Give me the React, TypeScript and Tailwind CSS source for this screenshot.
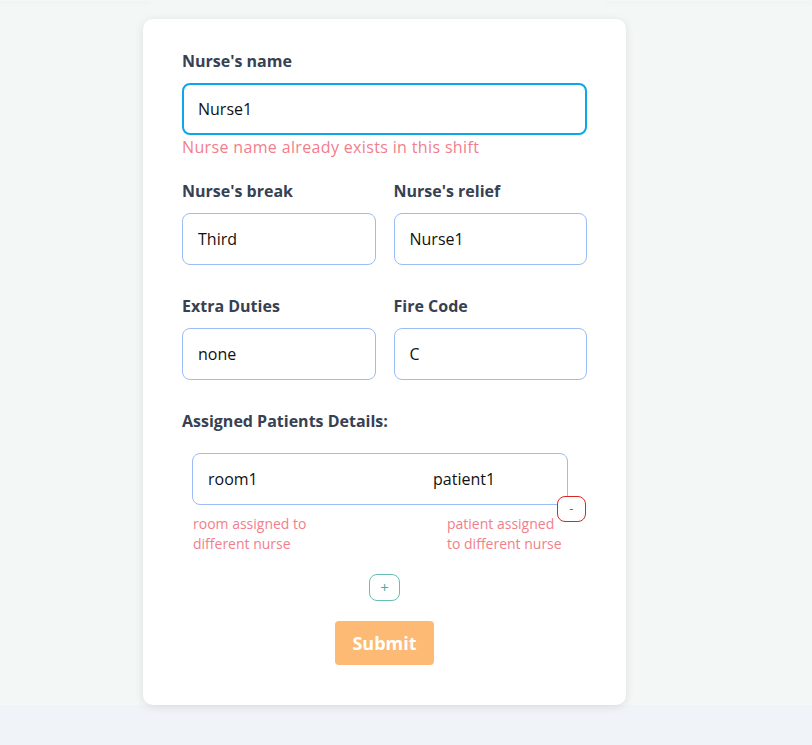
import { useState } from 'react';

const font = { fontFamily: '"Open Sans", "Noto Sans", sans-serif' };

function Field({ label, value }: { label: string; value: string }) {
  return (
    <div className="flex flex-col">
      <label className="text-[16px] leading-[24px] font-bold text-[#374151]">{label}</label>
      <input
        readOnly
        value={value}
        className="mt-[10px] h-[52px] w-full rounded-[8px] border border-[#9bbcf5] px-[15px] text-[16px] text-[#111] outline-none"
      />
    </div>
  );
}

export default function App() {
  const [name, setName] = useState('Nurse1');

  return (
    <div className="min-h-screen bg-[#f0f3f8]" style={font}>
      <div className="bg-[#f3f8f6]">
        <div className="flex h-0 justify-between">
          <div className="h-px w-[150px] bg-[#f3f8f6] shadow-[0_0_6px_rgba(0,0,0,0.12)]" />
          <div className="h-px w-[206px] bg-[#f3f8f6] shadow-[0_0_6px_rgba(0,0,0,0.12)]" />
        </div>
        <div className="flex pt-[19px]">
          <form className="ml-[143px] w-[483px] rounded-[10px] bg-white px-[39px] pt-[30px] pb-[40px] shadow-[0_2px_10px_rgba(0,0,0,0.1)]">
            <div className="flex flex-col">
              <label className="text-[16px] leading-[24px] font-bold text-[#374151]">Nurse's name</label>
              <input
                value={name}
                onChange={(e) => setName(e.target.value)}
                autoFocus
                className="mt-[10px] h-[52px] w-full rounded-[8px] border-2 border-[#0ea5e9] px-[14px] text-[16px] text-[#111] outline-none"
              />
              <p className="text-[16px] leading-[24px] tracking-[0.35px] text-[#f27e8b]">
                Nurse name already exists in this shift
              </p>
            </div>

            <div className="mt-[20px] grid grid-cols-2 gap-x-[18px] gap-y-[29px]">
              <Field label="Nurse's break" value="Third" />
              <Field label="Nurse's relief" value="Nurse1" />
              <Field label="Extra Duties" value="none" />
              <Field label="Fire Code" value="C" />
            </div>

            <h3 className="mt-[29px] text-[16px] leading-[24px] font-bold text-[#374151]">Assigned Patients Details:</h3>

            <div className="relative mt-[20px] ml-[10px] w-[376px]">
              <div className="flex h-[52px] items-center rounded-[8px] border border-[#9bbcf5] text-[16px] text-[#111]">
                <span className="w-[240px] pl-[15px]">room1</span>
                <span>patient1</span>
              </div>
              <button
                type="button"
                className="absolute top-[43px] right-[-18px] flex h-[26px] w-[29px] items-center justify-center rounded-[8px] border border-[#dc2626] bg-white text-[12px] leading-none text-[#dc2626]"
              >
                -
              </button>
            </div>

            <div className="mt-[9px] ml-[11px] flex text-[14px] leading-[20px] text-[#f27e8b]">
              <p className="w-[254px]">
                room assigned to
                <br />
                different nurse
              </p>
              <p>
                patient assigned
                <br />
                to different nurse
              </p>
            </div>

            <div className="mt-[20px] flex justify-center">
              <button
                type="button"
                className="flex h-[27px] w-[31px] items-center justify-center rounded-[8px] border border-[#6bbdb3] text-[15px] leading-none text-[#4fa99e]"
              >
                +
              </button>
            </div>

            <div className="mt-[20px] flex justify-center">
              <button
                type="button"
                className="h-[44px] w-[99px] rounded-[4px] bg-[#fdba74] text-[18px] font-bold text-white"
              >
                Submit
              </button>
            </div>
          </form>
        </div>
      </div>
    </div>
  );
}
